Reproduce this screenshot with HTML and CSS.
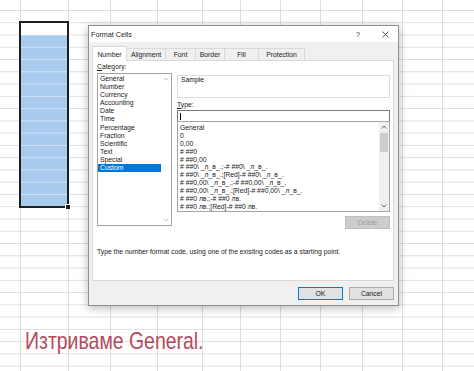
FILE: index.html
```html
<!DOCTYPE html>
<html>
<head>
    <title>Format Cells</title>
    <link rel="stylesheet" href="styles.css">
</head>
<body>
    <div class="sheet">
        <div class="col"></div><div class="col"></div><div class="col"></div><div class="col"></div>
        <div class="col"></div><div class="col"></div><div class="col"></div><div class="col"></div>
        <div class="col"></div><div class="col"></div><div class="col"></div><div class="col last"></div>

        <div class="selection">
            <div class="active-cell"></div>
            <div class="range"></div>
            <span class="fill-handle"></span>
        </div>

        <div class="caption">Изтриваме General.</div>

        <div class="dialog">
            <div class="titlebar">
                <span class="title">Format Cells</span>
                <span class="help">?</span>
                <svg class="close" width="7" height="7" viewBox="0 0 7 7">
                    <path d="M0.5 0.5 L6.5 6.5 M6.5 0.5 L0.5 6.5" stroke="#333" stroke-width="0.8" fill="none"/>
                </svg>
            </div>

            <div class="dlg-body">
                <div class="tabs">
                    <div class="tab selected">Number</div>
                    <div class="tab">Alignment</div>
                    <div class="tab">Font</div>
                    <div class="tab">Border</div>
                    <div class="tab">Fill</div>
                    <div class="tab">Protection</div>
                </div>

                <div class="panel">
                    <div class="panel-top">
                        <div class="cat-col">
                            <div class="label"><u>C</u>ategory:</div>
                            <div class="listbox cat-list">
                                <div class="items">
                                    <div class="item">General</div>
                                    <div class="item">Number</div>
                                    <div class="item">Currency</div>
                                    <div class="item">Accounting</div>
                                    <div class="item">Date</div>
                                    <div class="item">Time</div>
                                    <div class="item">Percentage</div>
                                    <div class="item">Fraction</div>
                                    <div class="item">Scientific</div>
                                    <div class="item">Text</div>
                                    <div class="item">Special</div>
                                    <div class="item picked">Custom</div>
                                </div>
                                <div class="vscroll plain">
                                    <svg width="6" height="4" viewBox="0 0 6 4"><path d="M0.5 3.5 L3 1 L5.5 3.5" stroke="#bbb" stroke-width="0.9" fill="none"/></svg>
                                    <svg width="6" height="4" viewBox="0 0 6 4"><path d="M0.5 0.5 L3 3 L5.5 0.5" stroke="#bbb" stroke-width="0.9" fill="none"/></svg>
                                </div>
                            </div>
                        </div>

                        <div class="type-col">
                            <div class="sample"><span class="legend">Sample</span></div>
                            <div class="label type-label"><u>T</u>ype:</div>
                            <div class="type-input"><span class="caret"></span></div>
                            <div class="listbox type-list">
                                <div class="items">
                                    <div class="item">General</div>
                                    <div class="item">0</div>
                                    <div class="item">0,00</div>
                                    <div class="item"># ##0</div>
                                    <div class="item"># ##0,00</div>
                                    <div class="item"># ##0\ _л_в_.;-# ##0\ _л_в_.</div>
                                    <div class="item"># ##0\ _л_в_.;[Red]-# ##0\ _л_в_.</div>
                                    <div class="item"># ##0,00\ _л_в_.;-# ##0,00\ _л_в_.</div>
                                    <div class="item"># ##0,00\ _л_в_.;[Red]-# ##0,00\ _л_в_.</div>
                                    <div class="item"># ##0 лв.;-# ##0 лв.</div>
                                    <div class="item"># ##0 лв.;[Red]-# ##0 лв.</div>
                                </div>
                                <div class="vscroll">
                                    <svg width="6" height="4" viewBox="0 0 6 4"><path d="M0.5 3.5 L3 1 L5.5 3.5" stroke="#555" stroke-width="0.9" fill="none"/></svg>
                                    <div class="thumb"></div>
                                    <svg class="down" width="6" height="4" viewBox="0 0 6 4"><path d="M0.5 0.5 L3 3 L5.5 0.5" stroke="#555" stroke-width="0.9" fill="none"/></svg>
                                </div>
                            </div>
                            <div class="btn-row">
                                <button class="btn disabled">Delete</button>
                            </div>
                        </div>
                    </div>
                    <p class="hint">Type the number format code, using one of the existing codes as a starting point.</p>
                </div>

                <div class="actions">
                    <button class="btn default">OK</button>
                    <button class="btn">Cancel</button>
                </div>
            </div>
        </div>
    </div>
</body>
</html>
```

FILE: styles.css
```css
body {
    margin: 0;
    padding: 0;
    font-family: "Liberation Sans", Arial, sans-serif;
    background: #fff;
    overflow: hidden;
}

/* spreadsheet grid behind the dialog */
.sheet {
    position: relative;
    width: 474px;
    height: 371px;
    display: grid;
    grid-template-columns: 21px 48px 42px 47px 45px 38px 40px 40px 42px 40px 40px 1fr;
    background-image: linear-gradient(#dedede 1px, transparent 1px);
    background-size: 100% 12.28px;
    background-position: 0 10px;
}

.col {
    border-right: 1px solid #dedede;
    box-sizing: border-box;
}

.col.last {
    border-right: none;
}

.selection {
    position: absolute;
    left: 19px;
    top: 21px;
    width: 50px;
    height: 187px;
    border: 2px solid #1f1f1f;
    box-sizing: border-box;
    display: flex;
    flex-direction: column;
}

.active-cell {
    height: 12px;
    background: #fff;
}

.range {
    flex: 1;
    background-color: #a9cbee;
    background-image: linear-gradient(rgba(255,255,255,0.45) 1px, transparent 1px);
    background-size: 100% 12.28px;
    background-position: 0 11.8px;
}

.fill-handle {
    position: absolute;
    right: -4px;
    bottom: -4px;
    width: 4px;
    height: 4px;
    background: #1f1f1f;
    border: 1px solid #fff;
}

/* the font in the shot is a narrow sans, squeeze the regular one */
.caption {
    position: absolute;
    left: 25px;
    top: 327px;
    font-size: 24px;
    color: #b44b5c;
    white-space: nowrap;
    transform: scaleX(0.81);
    transform-origin: left top;
}

/* dialog */
.dialog {
    position: absolute;
    left: 88px;
    top: 25px;
    width: 311px;
    height: 281px;
    box-sizing: border-box;
    border: 1px solid #8e8e8e;
    background: #f0f0f0;
    box-shadow: 0 2px 9px rgba(0,0,0,0.28);
    font-size: 6.8px;
    color: #1a1a1a;
    display: flex;
    flex-direction: column;
}

.titlebar {
    height: 16px;
    background: #fff;
    display: flex;
    align-items: center;
    padding: 0 9px 0 2px;
}

.title {
    font-size: 7.2px;
}

.help {
    margin-left: auto;
    font-size: 7px;
    margin-right: 22px;
}

.dlg-body {
    flex: 1;
    padding: 4px 4px 5px 3px;
    display: flex;
    flex-direction: column;
}

.tabs {
    display: grid;
    grid-template-columns: 35px 39px 30px 29px 34px 46px;
    height: 14px;
    position: relative;
    z-index: 1;
}

.tab {
    margin-top: 2px;
    border: 1px solid #d9d9d9;
    border-left: none;
    border-bottom: none;
    background: #f0f0f0;
    display: flex;
    align-items: center;
    justify-content: center;
    color: #222;
}

.tab.selected {
    margin-top: 0;
    margin-bottom: -1px;
    border-left: 1px solid #d9d9d9;
    background: #fff;
}

.panel {
    height: 221px;
    box-sizing: border-box;
    border: 1px solid #d9d9d9;
    background: #fff;
    padding: 2px 3px 0 4px;
}

.panel-top {
    display: flex;
    gap: 5px;
}

.cat-col {
    width: 75px;
}

.type-col {
    flex: 1;
}

.label {
    height: 8px;
    line-height: 8px;
    margin-bottom: 2px;
}

.listbox {
    display: flex;
    border: 1px solid #a5a5a5;
    box-sizing: border-box;
    overflow: hidden;
}

.items {
    flex: 1;
    padding: 1px 0 0 0;
    overflow: hidden;
}

.item {
    line-height: 8.1px;
    height: 8.1px;
    padding-left: 2px;
    white-space: nowrap;
}

.item.picked {
    background: #0078d7;
    color: #fff;
}

.cat-list {
    height: 153px;
}

.vscroll {
    width: 10px;
    background: #f0f0f0;
    display: flex;
    flex-direction: column;
    align-items: center;
    padding: 3px 0;
    box-sizing: border-box;
}

.vscroll.plain {
    background: #fff;
    justify-content: space-between;
}

.vscroll .thumb {
    width: 8px;
    height: 19px;
    margin-top: 4px;
    background: #cdcdcd;
}

.vscroll .down {
    margin-top: auto;
}

.sample {
    margin-top: 12px;
    height: 23px;
    border: 1px solid #dcdcdc;
    box-sizing: border-box;
}

.legend {
    display: block;
    line-height: 8px;
    padding: 0 3px;
}

.type-label {
    margin-top: 3px;
    margin-bottom: 1px;
}

.type-input {
    height: 12px;
    border: 1px solid #7a7a7a;
    box-sizing: border-box;
    display: flex;
    align-items: center;
    padding-left: 2px;
}

.caret {
    width: 1px;
    height: 7px;
    background: #000;
}

.type-list {
    height: 91px;
    margin-top: -1px;
}

.type-list .items {
    padding-top: 2px;
}

.type-list .item {
    height: 7.9px;
    line-height: 7.9px;
}

.btn-row {
    display: flex;
    justify-content: flex-end;
    margin-top: 4px;
}

.btn {
    width: 45px;
    height: 13px;
    padding: 0;
    border: 1px solid #adadad;
    background: #e1e1e1;
    font-family: inherit;
    font-size: 6.8px;
    color: #1a1a1a;
}

.btn.disabled {
    background: #cccccc;
    border-color: #bfbfbf;
    color: #9f9f9f;
}

.btn.default {
    border-color: #0078d7;
}

.hint {
    margin: 19px 0 0;
    line-height: 8px;
}

.actions {
    display: flex;
    justify-content: flex-end;
    gap: 6px;
    margin-top: 6px;
}
```
